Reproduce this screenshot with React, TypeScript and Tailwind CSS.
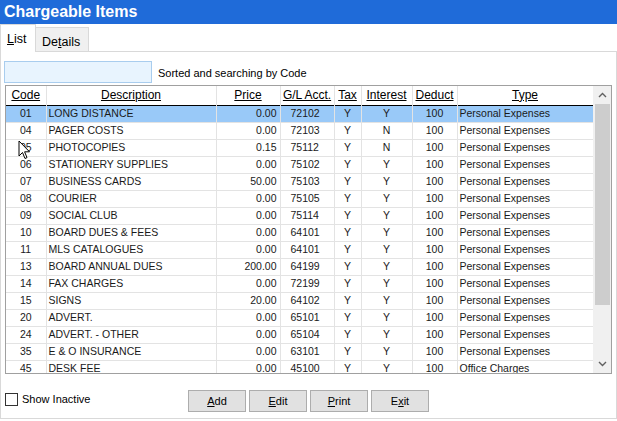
import { useState } from "react";

type Item = {
  code: string;
  description: string;
  price: string;
  gl: string;
  tax: string;
  interest: string;
  deduct: string;
  type: string;
};

const items: Item[] = [
  { code: "01", description: "LONG DISTANCE", price: "0.00", gl: "72102", tax: "Y", interest: "Y", deduct: "100", type: "Personal Expenses" },
  { code: "04", description: "PAGER COSTS", price: "0.00", gl: "72103", tax: "Y", interest: "N", deduct: "100", type: "Personal Expenses" },
  { code: "05", description: "PHOTOCOPIES", price: "0.15", gl: "75112", tax: "Y", interest: "N", deduct: "100", type: "Personal Expenses" },
  { code: "06", description: "STATIONERY SUPPLIES", price: "0.00", gl: "75102", tax: "Y", interest: "Y", deduct: "100", type: "Personal Expenses" },
  { code: "07", description: "BUSINESS CARDS", price: "50.00", gl: "75103", tax: "Y", interest: "Y", deduct: "100", type: "Personal Expenses" },
  { code: "08", description: "COURIER", price: "0.00", gl: "75105", tax: "Y", interest: "Y", deduct: "100", type: "Personal Expenses" },
  { code: "09", description: "SOCIAL CLUB", price: "0.00", gl: "75114", tax: "Y", interest: "Y", deduct: "100", type: "Personal Expenses" },
  { code: "10", description: "BOARD DUES & FEES", price: "0.00", gl: "64101", tax: "Y", interest: "Y", deduct: "100", type: "Personal Expenses" },
  { code: "11", description: "MLS CATALOGUES", price: "0.00", gl: "64101", tax: "Y", interest: "Y", deduct: "100", type: "Personal Expenses" },
  { code: "13", description: "BOARD ANNUAL DUES", price: "200.00", gl: "64199", tax: "Y", interest: "Y", deduct: "100", type: "Personal Expenses" },
  { code: "14", description: "FAX CHARGES", price: "0.00", gl: "72199", tax: "Y", interest: "Y", deduct: "100", type: "Personal Expenses" },
  { code: "15", description: "SIGNS", price: "20.00", gl: "64102", tax: "Y", interest: "Y", deduct: "100", type: "Personal Expenses" },
  { code: "20", description: "ADVERT.", price: "0.00", gl: "65101", tax: "Y", interest: "Y", deduct: "100", type: "Personal Expenses" },
  { code: "24", description: "ADVERT. - OTHER", price: "0.00", gl: "65104", tax: "Y", interest: "Y", deduct: "100", type: "Personal Expenses" },
  { code: "35", description: "E & O INSURANCE", price: "0.00", gl: "63101", tax: "Y", interest: "Y", deduct: "100", type: "Personal Expenses" },
  { code: "45", description: "DESK FEE", price: "0.00", gl: "45100", tax: "Y", interest: "Y", deduct: "100", type: "Office Charges" },
];

const headers = ["Code", "Description", "Price", "G/L Acct.", "Tax", "Interest", "Deduct", "Type"];
const widths = [40, 170, 64, 54, 27, 51, 45, 136];

// first letter of the caption gets the access-key underline
const Btn = ({ label, keyIdx = 0 }: { label: string; keyIdx?: number }) => (
  <button className="w-[58px] h-[22px] bg-[#e1e1e1] border border-[#adadad] text-[11px] text-black flex items-center justify-center">
    {label.slice(0, keyIdx)}
    <span className="underline">{label[keyIdx]}</span>
    {label.slice(keyIdx + 1)}
  </button>
);

export default function App() {
  const [selected, setSelected] = useState("01");
  const [showInactive, setShowInactive] = useState(false);

  return (
    <div className="w-[617px] h-[421px] bg-white font-['Liberation_Sans',Arial,sans-serif] text-black flex flex-col relative overflow-hidden">
      {/* title */}
      <div className="h-[24px] bg-[#1f6bd9] text-white font-bold text-[16px] pl-[4px] flex items-center shrink-0">
        Chargeable Items
      </div>

      {/* tabs */}
      <div className="h-[28px] flex items-end shrink-0 relative z-10">
        <div className="h-[28px] w-[36px] bg-white border-l border-t border-r border-[#d9d9d9] text-[12.5px] pl-[6px] pt-[5px]">
          <span className="underline">L</span>ist
        </div>
        <div className="h-[25px] w-[53px] bg-[#f0f0f0] border-t border-r border-b border-[#d9d9d9] text-[12.5px] pl-[6px] pt-[5px]">
          De<span className="underline">t</span>ails
        </div>
      </div>

      {/* panel */}
      <div className="h-[368px] border border-[#d9d9d9] -mt-px flex flex-col">
        <div className="flex items-center mt-[9px] ml-[3px] gap-[6px]">
          <input className="w-[148px] h-[22px] bg-[#e8f4fe] border border-[#a9cdee] outline-none px-1 text-[11px]" />
          <span className="text-[11px] mt-[2px]">Sorted and searching by Code</span>
        </div>

        {/* grid */}
        <div className="mt-[2px] ml-[4px] w-[607px] h-[289px] border border-[#a0a0a0] flex overflow-hidden">
          <div className="w-[587px] overflow-hidden">
            <table className="table-fixed border-collapse w-[587px]">
              <colgroup>
                {widths.map((w, i) => (
                  <col key={i} style={{ width: w }} />
                ))}
              </colgroup>
              <thead>
                <tr className="h-[19px] border-b border-black">
                  {headers.map((h) => (
                    <th
                      key={h}
                      className="p-0 text-[12px] font-normal text-center underline border-r border-[#e3e3e3] leading-[17px] whitespace-nowrap"
                    >
                      {h}
                    </th>
                  ))}
                </tr>
              </thead>
              <tbody className="text-[10.5px] text-[#1a1a1a]">
                {items.map((it) => (
                  <tr
                    key={it.code}
                    onClick={() => setSelected(it.code)}
                    className={`h-[17px] border-b border-[#e3e3e3] ${selected === it.code ? "bg-[#99c9f8]" : ""}`}
                  >
                    <td className="p-0 text-center border-r border-[#e3e3e3]">{it.code}</td>
                    <td className="p-0 pl-[2px] border-r border-[#e3e3e3] whitespace-nowrap overflow-hidden">{it.description}</td>
                    <td className="p-0 pr-[3px] text-right border-r border-[#e3e3e3]">{it.price}</td>
                    <td className="p-0 pl-[10px] border-r border-[#e3e3e3]">{it.gl}</td>
                    <td className="p-0 text-center border-r border-[#e3e3e3]">{it.tax}</td>
                    <td className="p-0 text-center border-r border-[#e3e3e3]">{it.interest}</td>
                    <td className="p-0 text-center border-r border-[#e3e3e3]">{it.deduct}</td>
                    <td className="p-0 pl-[2px] whitespace-nowrap overflow-hidden">{it.type}</td>
                  </tr>
                ))}
              </tbody>
            </table>
          </div>

          {/* scrollbar */}
          <div className="w-[18px] bg-[#f0f0f0] flex flex-col items-center shrink-0">
            <div className="h-[18px] w-full flex items-center justify-center">
              <svg width="9" height="6" viewBox="0 0 9 6">
                <path d="M1 5 L4.5 1.5 L8 5" fill="none" stroke="#606060" strokeWidth="1.4" />
              </svg>
            </div>
            <div className="w-[15px] h-[201px] bg-[#cdcdcd]" />
            <div className="flex-1" />
            <div className="h-[18px] w-full flex items-center justify-center">
              <svg width="9" height="6" viewBox="0 0 9 6">
                <path d="M1 1 L4.5 4.5 L8 1" fill="none" stroke="#606060" strokeWidth="1.4" />
              </svg>
            </div>
          </div>
        </div>

        {/* footer */}
        <div className="flex items-start mt-[16px]">
          <label className="flex items-center ml-[4px] mt-[1px] gap-[4px] text-[11px] w-[183px] cursor-default">
            <input
              type="checkbox"
              checked={showInactive}
              onChange={(e) => setShowInactive(e.target.checked)}
              className="appearance-none w-[13px] h-[13px] border border-[#333] bg-white m-0"
            />
            Show Inactive
          </label>
          <div className="flex gap-[3px]">
            <Btn label="Add" />
            <Btn label="Edit" />
            <Btn label="Print" />
            <Btn label="Exit" keyIdx={1} />
          </div>
        </div>
      </div>

      {/* mouse pointer */}
      <svg className="absolute left-[18px] top-[140px] pointer-events-none" width="13" height="21" viewBox="0 0 13 21">
        <path d="M1 1 L1 16 L4.5 12.5 L7 18.5 L9 17.6 L6.6 11.8 L11.5 11.8 Z" fill="white" stroke="black" strokeWidth="1" strokeLinejoin="round" />
      </svg>
    </div>
  );
}
